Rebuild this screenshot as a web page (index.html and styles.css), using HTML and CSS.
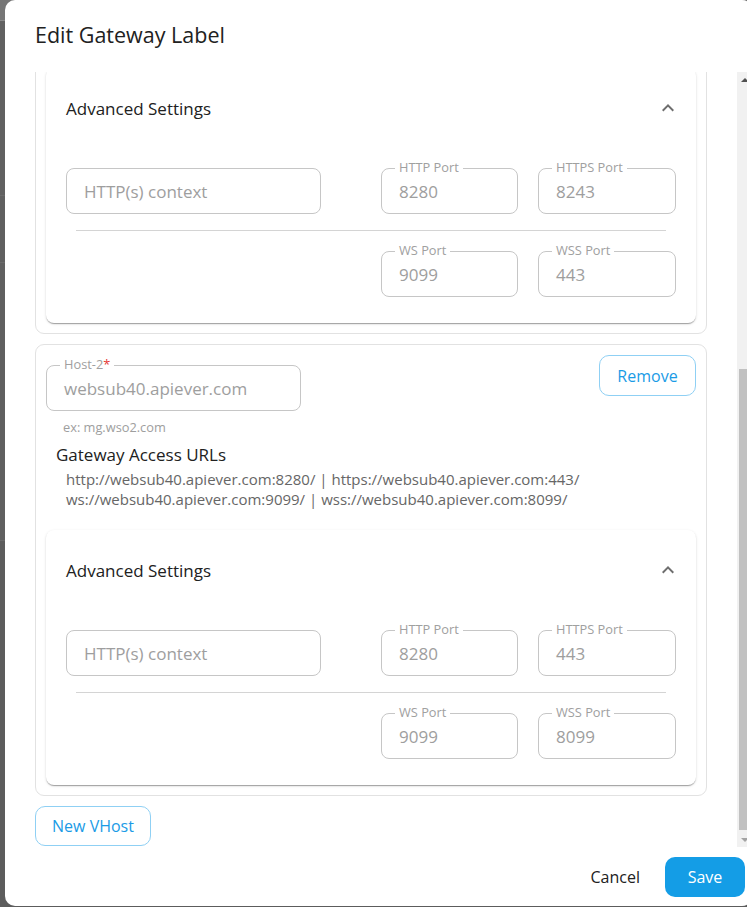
FILE: index.html
```html
<!DOCTYPE html>
<html lang="en">
<head>
<meta charset="utf-8">
<title>Edit Gateway Label</title>
<link rel="stylesheet" href="styles.css">
</head>
<body>
<div class="backdrop">
  <div class="dialog">
    <h2 class="title">Edit Gateway Label</h2>
    <div class="content">
      <div class="scroll">
        <div class="scroll-inner">
          <section class="vhost">
            <div class="card">
              <div class="card-head">
                <span class="card-title">Advanced Settings</span>
                <svg class="chev" viewBox="0 0 24 24" width="24" height="24"><path d="M12 8l-6 6 1.41 1.41L12 10.83l4.59 4.58L18 14z"/></svg>
              </div>
              <div class="card-body">
                <div class="row">
                  <div class="field ctx">HTTP(s) context</div>
                  <div class="ports">
                    <div class="field port"><span class="field-label">HTTP Port</span>8280</div>
                    <div class="field port wide"><span class="field-label">HTTPS Port</span>8243</div>
                  </div>
                </div>
                <div class="divider"></div>
                <div class="row row-end">
                  <div class="ports">
                    <div class="field port"><span class="field-label">WS Port</span>9099</div>
                    <div class="field port wide"><span class="field-label">WSS Port</span>443</div>
                  </div>
                </div>
              </div>
            </div>
          </section>

          <section class="vhost">
            <div class="vhost-head">
              <div class="field host-field"><span class="field-label">Host-2<span class="req">*</span></span>websub40.apiever.com</div>
              <button class="btn-outline remove">Remove</button>
            </div>
            <div class="helper">ex: mg.wso2.com</div>
            <div class="gw-title">Gateway Access URLs</div>
            <div class="urls">http://websub40.apiever.com:8280/ | https://websub40.apiever.com:443/<br>ws://websub40.apiever.com:9099/ | wss://websub40.apiever.com:8099/</div>
            <div class="card">
              <div class="card-head">
                <span class="card-title">Advanced Settings</span>
                <svg class="chev" viewBox="0 0 24 24" width="24" height="24"><path d="M12 8l-6 6 1.41 1.41L12 10.83l4.59 4.58L18 14z"/></svg>
              </div>
              <div class="card-body">
                <div class="row">
                  <div class="field ctx">HTTP(s) context</div>
                  <div class="ports">
                    <div class="field port"><span class="field-label">HTTP Port</span>8280</div>
                    <div class="field port wide"><span class="field-label">HTTPS Port</span>443</div>
                  </div>
                </div>
                <div class="divider"></div>
                <div class="row row-end">
                  <div class="ports">
                    <div class="field port"><span class="field-label">WS Port</span>9099</div>
                    <div class="field port wide"><span class="field-label">WSS Port</span>8099</div>
                  </div>
                </div>
              </div>
            </div>
          </section>

          <button class="btn-outline new-vhost">New VHost</button>
        </div>
      </div>
      <div class="scrollbar">
        <div class="sb-btn"><span class="arrow-up"></span></div>
        <div class="sb-track"><div class="sb-thumb"></div></div>
        <div class="sb-btn"><span class="arrow-down"></span></div>
      </div>
    </div>
    <div class="actions">
      <button class="btn-text">Cancel</button>
      <button class="btn-primary">Save</button>
    </div>
  </div>
</div>
</body>
</html>
```

FILE: styles.css
```css
* { box-sizing: border-box; }

html, body {
  margin: 0;
  height: 907px;
  overflow: hidden;
}

body {
  font-family: "Open Sans", "Liberation Sans", sans-serif;
  background:
    linear-gradient(to bottom,
      #767676 0px, #767676 20px,
      #8a8a8a 20px, #8a8a8a 21px,
      #616161 21px, #616161 195px,
      #6b6b6b 195px, #6b6b6b 196px,
      #606060 196px, #606060 262px,
      #6b6b6b 262px, #6b6b6b 263px,
      #606060 263px, #606060 540px,
      #6a6a6a 540px, #6a6a6a 541px,
      #5c5c5c 541px);
  color: #212121;
}

.backdrop {
  padding-left: 5px;
}

.dialog {
  width: 747px;
  height: 906px;
  background: #fff;
  border-radius: 10px;
  display: flex;
  flex-direction: column;
  overflow: hidden;
}

.title {
  margin: 0;
  height: 72px;
  padding: 0 30px 3px;
  display: flex;
  align-items: center;
  font-size: 21.5px;
  font-weight: 400;
  color: #212121;
  flex: none;
}

.content {
  height: 775px;
  display: flex;
  flex: none;
}

.scroll {
  flex: 1;
  overflow: hidden;
  padding: 0 30px;
}

.scroll-inner {
  margin-top: -15px;
}

.vhost {
  border: 1px solid #e2e2e2;
  border-radius: 9px;
  padding: 10px;
  margin-bottom: 10px;
}

.vhost-head {
  display: flex;
  justify-content: space-between;
  align-items: flex-start;
}

.field {
  position: relative;
  height: 46px;
  border: 1px solid #c6c6c6;
  border-radius: 8px;
  display: flex;
  align-items: center;
  padding: 0 17px;
  color: #9e9e9e;
  font-size: 17px;
  white-space: nowrap;
}

.field-label {
  position: absolute;
  top: -10px;
  left: 13px;
  padding: 0 4px;
  background: #fff;
  font-size: 12.8px;
  line-height: 16px;
  color: #a0a0a0;
}

.req { color: #e53935; }

.host-field {
  width: 255px;
  margin-top: 10px;
}

.helper {
  margin: 8px 0 0 17px;
  font-size: 12.8px;
  line-height: 16px;
  color: #9e9e9e;
}

.gw-title {
  margin-top: 8px;
  padding-left: 10px;
  font-size: 17px;
  line-height: 24px;
  color: #212121;
}

.urls {
  margin-top: 2px;
  padding-left: 20px;
  font-size: 15px;
  line-height: 20px;
  color: #666;
}

.card {
  margin-top: 21px;
  border-radius: 8px;
  background: #fff;
  box-shadow: 0 2px 1px -1px rgba(0,0,0,0.2), 0 1px 1px 0 rgba(0,0,0,0.14), 0 1px 3px 0 rgba(0,0,0,0.12);
}

.vhost > .card:first-child { margin-top: 0; }

.card-head {
  height: 80px;
  padding: 0 16px 0 20px;
  display: flex;
  justify-content: space-between;
  align-items: center;
}

.card-title {
  font-size: 17px;
  color: #212121;
}

.chev { fill: #6e6e6e; }

.card-body {
  padding: 20px 20px 26px;
}

.row {
  display: flex;
  justify-content: space-between;
}

.row-end { justify-content: flex-end; }

.ctx { width: 255px; }

.ports {
  display: flex;
  gap: 20px;
}

.port { width: 137px; }
.port.wide { width: 138px; }

.divider {
  height: 1px;
  background: #d4d4d4;
  margin: 16px 10px 20px;
}

button {
  font-family: "Open Sans", "Liberation Sans", sans-serif;
  font-size: 16px;
  cursor: pointer;
  white-space: nowrap;
}

.btn-outline {
  height: 41px;
  padding: 0;
  background: #fff;
  color: #1a9be6;
  border: 1px solid #8fd0f4;
  border-radius: 10px;
}

.remove { width: 97px; }

.new-vhost {
  width: 116px;
  height: 40px;
}

.scrollbar {
  width: 15px;
  flex: none;
  background: #f1f1f1;
  display: flex;
  flex-direction: column;
}

.sb-btn {
  height: 15px;
  flex: none;
  display: flex;
  align-items: center;
  justify-content: center;
}

.arrow-up {
  width: 0;
  height: 0;
  border-left: 4px solid transparent;
  border-right: 4px solid transparent;
  border-bottom: 4px solid #505050;
}

.arrow-down {
  width: 0;
  height: 0;
  border-left: 4px solid transparent;
  border-right: 4px solid transparent;
  border-top: 4px solid #a3a3a3;
}

.sb-track {
  flex: 1;
  display: flex;
  flex-direction: column;
  justify-content: flex-end;
  padding: 0 2px 2px;
}

.sb-thumb {
  height: 461px;
  background: #c1c1c1;
}

.actions {
  flex: 1;
  display: flex;
  justify-content: flex-end;
  align-items: flex-start;
  gap: 11px;
  padding: 10px 7px 0;
}

.btn-text {
  height: 40px;
  padding: 0 14px;
  background: transparent;
  border: none;
  color: #212121;
}

.btn-primary {
  height: 40px;
  min-width: 80px;
  padding: 0 20px;
  background: #149de6;
  color: #fff;
  border: none;
  border-radius: 10px;
}
```
